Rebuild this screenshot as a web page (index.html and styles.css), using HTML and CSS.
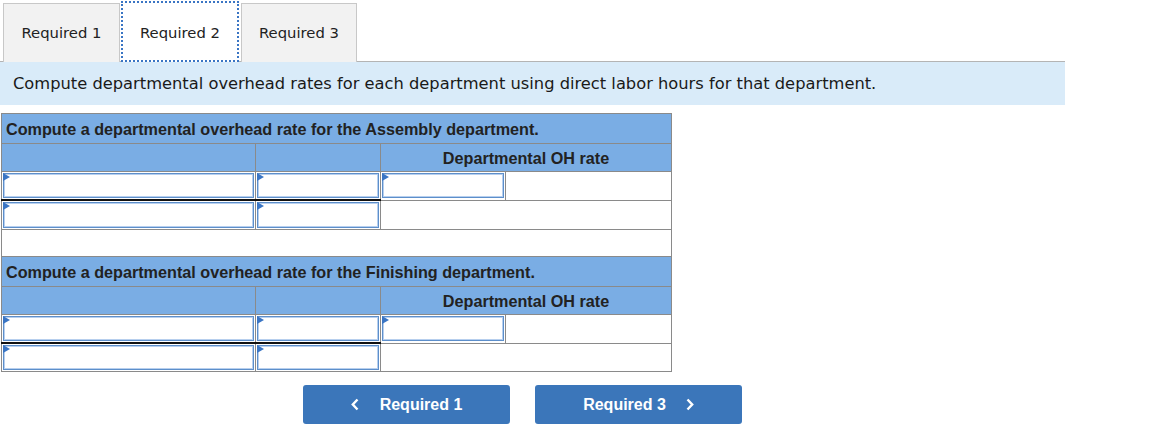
FILE: index.html
```html
<!DOCTYPE html>
<html lang="en">
    <head>
        <meta charset="utf-8">
        <link rel="stylesheet" href="styles.css">
    </head>
    <body>
        <div class="tabs">
            <div class="tab">Required 1</div>
            <div class="tab active">Required 2</div>
            <div class="tab">Required 3</div>
        </div>
        <div class="info">Compute departmental overhead rates for each department using direct labor hours for that department.</div>

        <table class="grid">
            <colgroup>
                <col class="c1"><col class="c2"><col class="c3"><col class="c4">
            </colgroup>
            <tr class="title"><td colspan="4">Compute a departmental overhead rate for the Assembly department.</td></tr>
            <tr class="head"><td></td><td></td><td colspan="2">Departmental OH rate</td></tr>
            <tr>
                <td class="under"><div class="inp"></div></td>
                <td class="under"><div class="inp"></div></td>
                <td><div class="inp"></div></td>
                <td></td>
            </tr>
            <tr>
                <td><div class="inp"></div></td>
                <td><div class="inp"></div></td>
                <td colspan="2"></td>
            </tr>
            <tr class="blank"><td colspan="4"></td></tr>
            <tr class="title"><td colspan="4">Compute a departmental overhead rate for the Finishing department.</td></tr>
            <tr class="head"><td></td><td></td><td colspan="2">Departmental OH rate</td></tr>
            <tr>
                <td class="under"><div class="inp"></div></td>
                <td class="under"><div class="inp"></div></td>
                <td><div class="inp"></div></td>
                <td></td>
            </tr>
            <tr>
                <td><div class="inp"></div></td>
                <td><div class="inp"></div></td>
                <td colspan="2"></td>
            </tr>
        </table>

        <div class="nav">
            <button class="btn">
                <svg class="chev left" width="8" height="13" viewBox="0 0 8 13"><polyline points="6.5,1.5 1.8,6.5 6.5,11.5" fill="none" stroke="#fff" stroke-width="2.4"/></svg>
                Required 1
            </button>
            <button class="btn">
                Required 3
                <svg class="chev right" width="8" height="13" viewBox="0 0 8 13"><polyline points="1.5,1.5 6.2,6.5 1.5,11.5" fill="none" stroke="#fff" stroke-width="2.4"/></svg>
            </button>
        </div>
    </body>
</html>
```

FILE: styles.css
```css
*{
    margin: 0;
    padding: 0;
    box-sizing: border-box;
}
body{
    font-family: "DejaVu Sans", Verdana, sans-serif;
    color: #222;
    background: #fff;
}
.tabs{
    display: flex;
    align-items: flex-end;
    gap: 1px;
    height: 62px;
    padding-left: 3px;
    border-bottom: 1px solid #b4b4b4;
    width: 1065px;
}
.tab{
    width: 117px;
    height: 59px;
    display: flex;
    align-items: center;
    justify-content: center;
    font-size: 14.8px;
    background: #f2f2f2;
    border: 1px solid #c8c8c8;
    border-bottom: none;
    margin-bottom: -1px;
    padding-bottom: 2px;
}
.tab.active{
    width: 118px;
    height: 61px;
    background: #fff;
    border: 2px dotted #3a75c4;
    padding: 2px 0 0 0;
}
.tab:last-child{
    margin-left: 1px;
    width: 116px;
}
.info{
    width: 1065px;
    height: 43px;
    background: #d9ebf9;
    font-size: 16.3px;
    padding: 12px 0 0 13px;
    color: #1a1a1a;
}
.grid{
    margin: 8px 0 0 1px;
    border-collapse: collapse;
    width: 670px;
    table-layout: fixed;
    font-family: "Liberation Sans", Arial, sans-serif;
    font-size: 16.2px;
    font-weight: bold;
}
.c1{ width: 254px; }
.c2{ width: 125px; }
.c3{ width: 125px; }
.c4{ width: 166px; }
.grid td{
    border: 1px solid #8a8a8a;
    height: 27.4px;
    padding: 1px;
    vertical-align: top;
}
.grid tr.title td{
    height: 29.8px;
    background: #7aade4;
    padding: 6px 0 0 4px;
    color: #222;
}
.grid tr.head td{
    height: 28.4px;
    background: #7aade4;
    text-align: center;
    padding: 5px 0 0 0;
    color: #222;
}
.grid tr.blank td{
    height: 27.2px;
}
.grid td.under{
    border-bottom: 2px solid #111;
}
.inp{
    position: relative;
    height: 25.2px;
    border: 1px solid #5d8fcb;
    box-shadow: inset 0 0 0 1px #b7cfee;
    background: #fff;
}
.inp::before{
    content: "";
    position: absolute;
    left: -1px;
    top: -1px;
    border-left: 7px solid #3a75c4;
    border-top: 4px solid transparent;
    border-bottom: 4px solid transparent;
}
.nav{
    display: flex;
    gap: 25px;
    margin: 13px 0 0 303px;
}
.btn{
    width: 207px;
    height: 39px;
    background: #3b76ba;
    border: none;
    border-radius: 3px;
    color: #fff;
    font-family: "Liberation Sans", Arial, sans-serif;
    font-size: 16px;
    font-weight: bold;
    display: flex;
    align-items: center;
    justify-content: center;
}
.chev.left{
    margin-right: 21px;
}
.chev.right{
    margin-left: 20px;
}
```
